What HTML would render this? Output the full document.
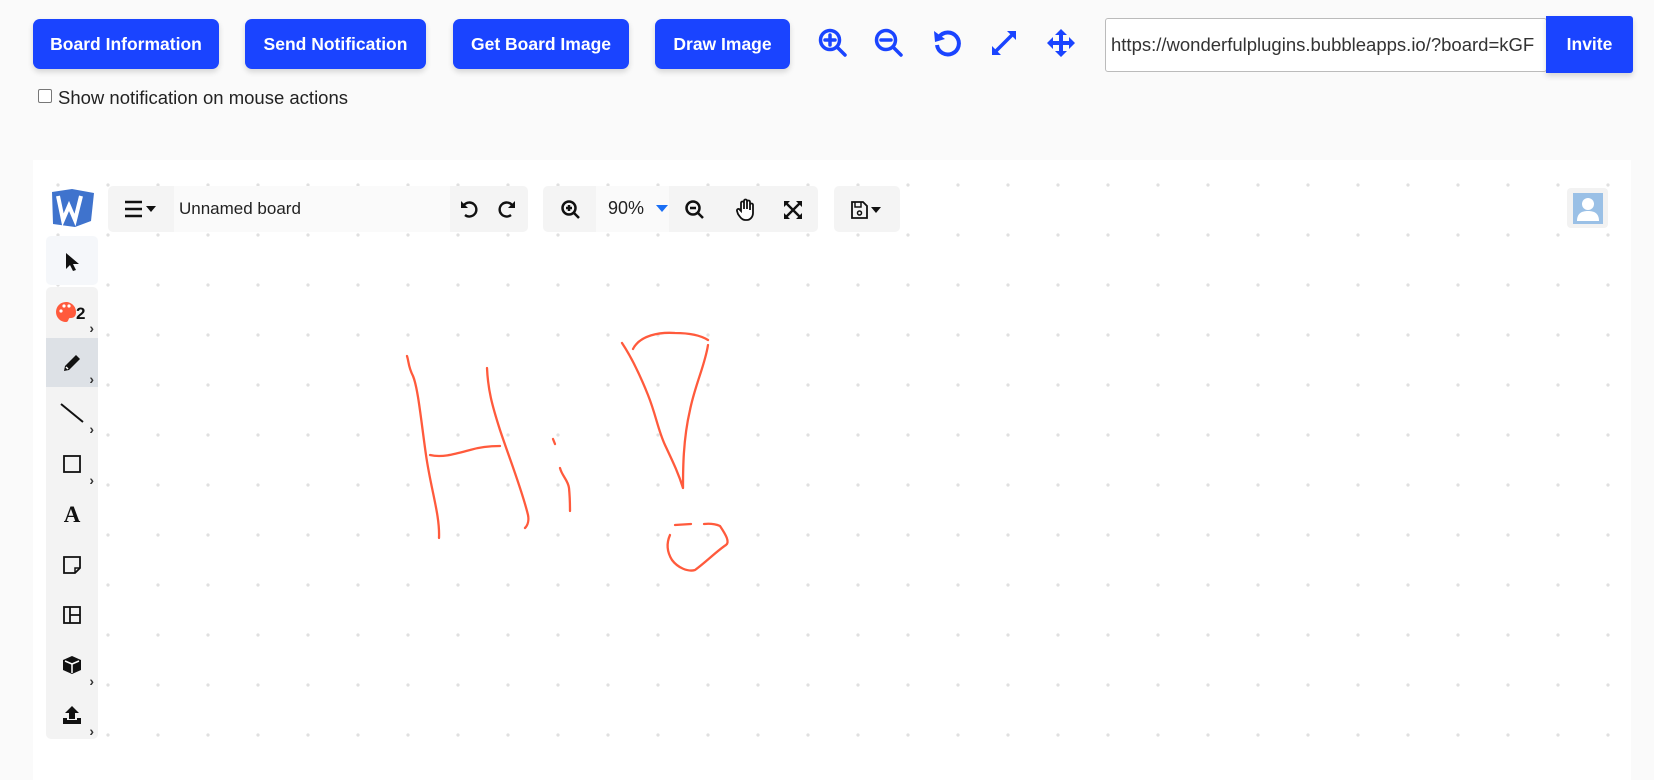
<!DOCTYPE html>
<html><head><meta charset="utf-8"><style>
*{box-sizing:border-box;margin:0;padding:0}
body{width:1654px;height:780px;background:#fafafa;font-family:"Liberation Sans",Arial,sans-serif;position:relative;overflow:hidden}
.btn{position:absolute;top:19px;height:50px;background:#1a44ff;color:#fff;border-radius:7px;font-size:17.5px;font-weight:600;display:flex;align-items:center;justify-content:center;box-shadow:0 3px 6px rgba(0,0,0,.15)}
.ico{position:absolute;top:27px;width:32px;height:32px}
.canvas{position:absolute;left:33px;top:160px;width:1598px;height:620px;background-color:#fff;background-image:radial-gradient(circle,#e0e0e0 1.4px,transparent 1.9px);background-size:50px 50px;background-position:50px 0px}
.grp{position:absolute;top:186px;height:46px;background:#f4f4f4;border-radius:5px}
.tb{position:absolute;left:46px;width:52px}
.ti{position:absolute;left:46px;width:52px;height:50px;display:flex;align-items:center;justify-content:center}
.chev{position:absolute;right:4px;bottom:1px;font-size:14px;font-weight:bold;color:#333}
</style></head><body>
<div class="btn" style="left:33px;width:186px">Board Information</div>
<div class="btn" style="left:245px;width:181px">Send Notification</div>
<div class="btn" style="left:453px;width:176px">Get Board Image</div>
<div class="btn" style="left:655px;width:135px">Draw Image</div>
<svg class="ico" style="left:817px" viewBox="0 0 32 32"><circle cx="13" cy="13" r="9.5" fill="none" stroke="#1a44ff" stroke-width="3.5"/><path d="M20 20l8 8M13 8v10M8 13h10" stroke="#1a44ff" stroke-width="3.5" stroke-linecap="round"/></svg>
<svg class="ico" style="left:873px" viewBox="0 0 32 32"><circle cx="13" cy="13" r="9.5" fill="none" stroke="#1a44ff" stroke-width="3.5"/><path d="M20 20l8 8M8 13h10" stroke="#1a44ff" stroke-width="3.5" stroke-linecap="round"/></svg>
<svg class="ico" style="left:931px" viewBox="0 0 32 32"><path d="M8 10A11 11 0 1 1 6 18" fill="none" stroke="#1a44ff" stroke-width="4"/><path d="M3 4l1 11 10-3z" fill="#1a44ff"/></svg>
<svg class="ico" style="left:988px" viewBox="0 0 32 32"><path d="M19 4h9v9zM13 28H4v-9z" fill="#1a44ff"/><path d="M25 7L7 25" stroke="#1a44ff" stroke-width="3.5"/></svg>
<svg class="ico" style="left:1045px" viewBox="0 0 32 32"><path d="M16 2l6 6H10zM16 30l-6-6h12zM2 16l6-6v12zM30 16l-6 6V10z" fill="#1a44ff"/><path d="M16 6v20M6 16h20" stroke="#1a44ff" stroke-width="4"/></svg>
<div style="position:absolute;left:1105px;top:18px;width:442px;height:54px;background:#fff;border:1px solid #bbb;border-radius:3px;font-size:18.5px;color:#333;padding:15px 5px;white-space:nowrap;overflow:hidden">https://wonderfulplugins.bubbleapps.io/?board=kGF</div>
<div class="btn" style="left:1546px;width:87px;top:16px;height:57px;border-radius:0 3px 3px 0">Invite</div>
<div style="position:absolute;left:38px;top:89px;width:14px;height:14px;border:1px solid #777;border-radius:2px;background:#fff"></div>
<div style="position:absolute;left:58px;top:87px;font-size:18.5px;color:#222">Show notification on mouse actions</div>

<div class="canvas"></div>
<svg style="position:absolute;left:46px;top:188px" width="51" height="40" viewBox="0 0 51 40"><path d="M6 4l20-3 22 4-3 28-16 6-22-3z" fill="#2a64c8" opacity=".9"/><path d="M12 8l5 24 6-14 6 14 6-24" fill="none" stroke="#fff" stroke-width="4"/></svg>
<div class="grp" style="left:108px;width:420px"></div>
<div style="position:absolute;left:174px;top:186px;width:276px;height:46px;background:#fafafa;font-size:17px;color:#222;padding:13px 5px">Unnamed board</div>
<svg style="position:absolute;left:124px;top:199px" width="36" height="20"><path d="M1 3h17M1 10h17M1 17h17" stroke="#111" stroke-width="2.6"/><path d="M22 7h10l-5 6z" fill="#111"/></svg>
<svg style="position:absolute;left:459px;top:199px" width="20" height="20" viewBox="0 0 20 20"><path d="M5 6A7 7 0 1 1 6 16" fill="none" stroke="#111" stroke-width="2.4"/><path d="M2 2v7h7z" fill="#111"/></svg>
<svg style="position:absolute;left:497px;top:199px" width="20" height="20" viewBox="0 0 20 20"><path d="M15 6A7 7 0 1 0 14 16" fill="none" stroke="#111" stroke-width="2.4"/><path d="M18 2v7h-7z" fill="#111"/></svg>
<div class="grp" style="left:543px;width:275px"></div>
<div style="position:absolute;left:596px;top:186px;width:73px;height:46px;background:#fafafa;font-size:18px;color:#222;padding:12px 12px">90%</div>
<svg style="position:absolute;left:656px;top:205px" width="12" height="8"><path d="M0 0h12L6 7z" fill="#1a6ff5"/></svg>
<svg style="position:absolute;left:560px;top:199px" width="22" height="22" viewBox="0 0 22 22"><circle cx="9" cy="9" r="6.5" fill="none" stroke="#111" stroke-width="2.5"/><path d="M14 14l5 5M9 6v6M6 9h6" stroke="#111" stroke-width="2.5"/></svg>
<svg style="position:absolute;left:684px;top:199px" width="22" height="22" viewBox="0 0 22 22"><circle cx="9" cy="9" r="6.5" fill="none" stroke="#111" stroke-width="2.5"/><path d="M14 14l5 5M6 9h6" stroke="#111" stroke-width="2.5"/></svg>
<svg style="position:absolute;left:735px;top:198px" width="22" height="24" viewBox="0 0 22 24"><path d="M6 13V5a1.5 1.5 0 0 1 3 0v6V3a1.5 1.5 0 0 1 3 0v8V4a1.5 1.5 0 0 1 3 0v8V7a1.5 1.5 0 0 1 3 0v8c0 4-3 7-6 7h-2c-3 0-5-3-7-6l-1-3a1.5 1.5 0 0 1 3-1z" fill="#fff" stroke="#111" stroke-width="1.8"/></svg>
<svg style="position:absolute;left:783px;top:200px" width="20" height="20" viewBox="0 0 20 20"><path d="M1 1h6L1 7zM19 1v6l-6-6zM1 19v-6l6 6zM19 19h-6l6-6z" fill="#111"/><path d="M3 3l14 14M17 3L3 17" stroke="#111" stroke-width="2.4"/></svg>
<div class="grp" style="left:834px;width:66px"></div>
<svg style="position:absolute;left:850px;top:200px" width="36" height="20"><path d="M2 2h11l4 4v12H2z" fill="none" stroke="#111" stroke-width="1.8"/><path d="M5 2v5h6V2" fill="none" stroke="#111" stroke-width="1.5"/><circle cx="9.5" cy="13" r="2" fill="none" stroke="#111" stroke-width="1.5"/><path d="M21 7h10l-5 6z" fill="#111"/></svg>
<div style="position:absolute;left:1567px;top:188px;width:41px;height:40px;background:#f2f2f2;border-radius:4px"></div>
<svg style="position:absolute;left:1573px;top:193px" width="30" height="31"><rect width="30" height="31" fill="#9ac0e6"/><circle cx="15" cy="11" r="6" fill="#fff"/><path d="M4 28c0-8 5-10 11-10s11 2 11 10z" fill="#fff"/></svg>

<div class="tb" style="top:236px;height:49px;background:#f5f7fa;border-radius:5px"></div>
<div class="tb" style="top:287px;height:452px;background:#f3f3f3;border-radius:5px"></div>
<div class="tb" style="top:338px;height:49px;background:#dde1e6"></div>
<div class="ti" style="top:237px"><svg width="16" height="20"><path d="M2 1v16l4-4 3 6 3-1-3-6h6z" fill="#111"/></svg></div>
<div class="ti" style="top:287px"><svg width="34" height="24"><path d="M11 2a10 10 0 1 0 0 20c3 0 2-4 4-4s6 0 6-6c0-6-5-10-10-10z" fill="#ff5a3c"/><circle cx="6" cy="11" r="1.6" fill="#fff"/><circle cx="9" cy="6" r="1.6" fill="#fff"/><circle cx="14" cy="6" r="1.6" fill="#fff"/><text x="21" y="19" font-size="17" font-weight="bold" font-family="Liberation Sans" fill="#111">2</text></svg><span class="chev">›</span></div>
<div class="ti" style="top:338px"><svg width="22" height="22"><path d="M3 19l1-5L15 3l4 4L8 18z" fill="#111"/><path d="M5 15l2 2" stroke="#fff" stroke-width="1.5"/></svg><span class="chev">›</span></div>
<div class="ti" style="top:388px"><svg width="26" height="24"><path d="M2 3l22 18" stroke="#111" stroke-width="2"/></svg><span class="chev">›</span></div>
<div class="ti" style="top:439px"><svg width="20" height="20"><rect x="2" y="2" width="16" height="16" fill="none" stroke="#111" stroke-width="1.8"/></svg><span class="chev">›</span></div>
<div class="ti" style="top:490px;font-family:'Liberation Serif',serif;font-weight:bold;font-size:23px;color:#111">A</div>
<div class="ti" style="top:540px"><svg width="20" height="20"><path d="M2 2h16v11l-5 5H2z" fill="none" stroke="#111" stroke-width="1.8"/><path d="M13 18v-5h5" fill="none" stroke="#111" stroke-width="1.5"/></svg></div>
<div class="ti" style="top:590px"><svg width="20" height="20"><rect x="2" y="2" width="16" height="16" fill="none" stroke="#111" stroke-width="1.8"/><path d="M8 2v16M8 10h10" stroke="#111" stroke-width="1.8"/></svg></div>
<div class="ti" style="top:640px"><svg width="20" height="20"><path d="M10 1l9 4v10l-9 4-9-4V5z" fill="#111"/><path d="M3 6l7 3 7-3M10 9v9" stroke="#fff" stroke-width="1.5" fill="none"/></svg><span class="chev">›</span></div>
<div class="ti" style="top:690px"><svg width="20" height="20"><path d="M10 1l7 7h-4v6H7V8H3z" fill="#111"/><path d="M1 13v6h18v-6h-4v2H5v-2z" fill="#111"/></svg><span class="chev">›</span></div>

<svg style="position:absolute;left:0;top:0" width="1654" height="780"><g fill="none" stroke="#ff5a3c" stroke-width="2.3" stroke-linecap="round" stroke-linejoin="round">
<path d="M407 356C409 362 408 366 413 376C418 388 421 420 426 455C431 490 440 515 439 538"/>
<path d="M430 455C442 458 455 454 470 450C480 447 490 446 500 446"/>
<path d="M487 368C488 390 492 405 500 430C510 460 522 490 528 515C529 520 528 525 525 528"/>
<path d="M553 439L555 444"/>
<path d="M560 468C562 476 568 480 569 488C570 498 570 505 570 511"/>
<path d="M622 343C630 355 640 375 648 395C656 415 658 430 665 445C672 460 678 472 683 488C683 470 683 440 690 410C695 385 705 365 708 345"/>
<path d="M633 349C640 335 660 332 675 333C690 333 700 335 708 340"/>
<path d="M675 525L691 524M704 524C712 523 718 525 720 526C726 535 730 542 726 545C718 550 706 562 695 570C688 572 678 568 672 560C667 552 666 544 670 535"/>
</g></svg>
</body></html>
